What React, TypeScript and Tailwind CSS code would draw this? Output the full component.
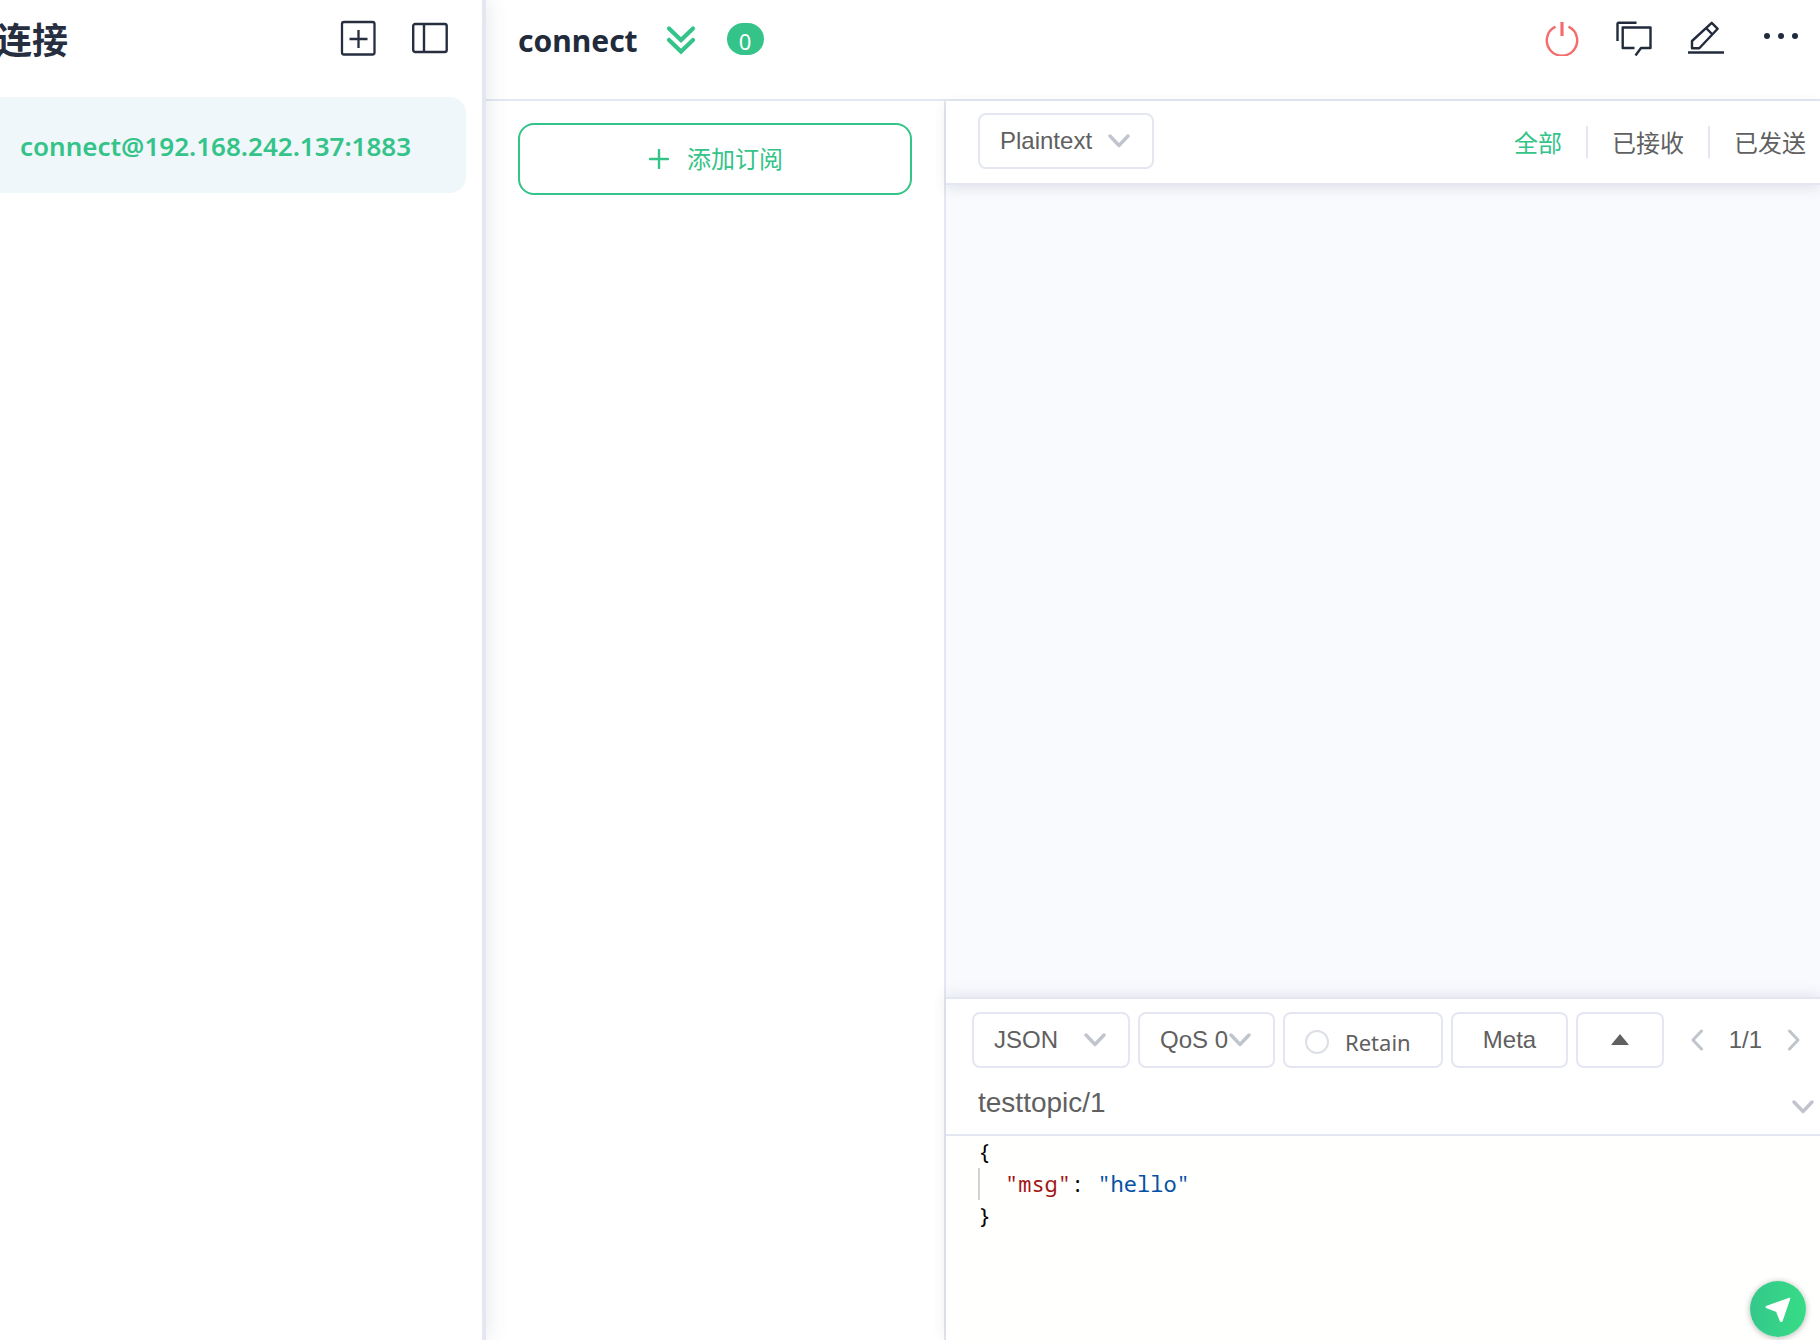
import { useState } from "react";
import type { ReactNode } from "react";

function Chevron({ className }: { className: string }) {
  return (
    <svg viewBox="0 0 22 14" fill="none" stroke="#c0c4cc" strokeWidth="3.4" strokeLinecap="round" strokeLinejoin="round" className={className} aria-hidden="true">
      <path d="M2 2 11 11.500 20 2" />
    </svg>
  );
}

function Dropdown({ label, options, box, arrow }: { label: string; options: string[]; box: string; arrow: string }) {
  return (
    <div className={`relative h-14 shrink-0 ${box}`}>
      <select
        aria-label={label}
        className="h-full w-full appearance-none rounded-lg border-2 border-[#e4e7f1] bg-white pl-5 font-['Liberation_Sans',sans-serif] text-2xl text-[#606060]"
      >
        {options.map((o) => (
          <option key={o}>{o}</option>
        ))}
      </select>
      <Chevron className={`pointer-events-none absolute top-[21px] h-[14px] w-[22px] ${arrow}`} />
    </div>
  );
}

function IconButton({ label, className = "", children }: { label: string; className?: string; children: ReactNode }) {
  return (
    <button type="button" aria-label={label} className={`flex h-9 w-9 shrink-0 items-center justify-center ${className}`}>
      {children}
    </button>
  );
}

function Sidebar() {
  return (
    <aside className="relative z-10 w-[486px] shrink-0 border-r-4 border-[#e4e7f1] bg-white shadow-[2px_0_20px_rgba(60,70,90,0.12)]">
      <header className="flex h-[97px] items-start pr-[34px] pt-5">
        <h1 className="-ml-1 flex-1 text-4xl font-bold leading-[42px] text-[#262e3f]">连接</h1>
        <div className="flex gap-9">
          <IconButton label="新建连接">
            <svg viewBox="0 0 36 36" className="h-9 w-9" fill="none" stroke="#262e3f" strokeWidth="2.3">
              <rect x="2" y="2" width="32.500" height="32.500" rx="2" />
              <path d="M18.500 10v18M9.500 19h18" />
            </svg>
          </IconButton>
          <IconButton label="收起侧栏">
            <svg viewBox="0 0 36 36" className="h-9 w-9" fill="none" stroke="#262e3f" strokeWidth="2.4">
              <rect x="1.200" y="4" width="33.500" height="28" rx="2" />
              <path d="M12 4v28" />
            </svg>
          </IconButton>
        </div>
      </header>
      <a href="#connect" className="mr-4 flex h-24 items-center rounded-r-2xl bg-[#f0f7fb] pl-5 pt-[2px] text-[26px] font-semibold text-[#34c388]">
        connect@192.168.242.137:1883
      </a>
    </aside>
  );
}

function TopBar() {
  return (
    <header className="flex h-[101px] shrink-0 items-start border-b-2 border-[#e4e7f1] pl-8 pr-5 pt-5">
      <h2 className="text-[30px] font-bold leading-[42px] text-[#222b3c]">connect</h2>
      <button type="button" aria-label="展开连接信息" className="ml-[27px] mt-1 h-8 w-8">
        <svg viewBox="0 0 32 32" className="h-8 w-8" fill="none" stroke="#34c388" strokeWidth="4.2" strokeLinecap="round">
          <path d="M4 4.500 16 16 28 4.500M4 16 16 27.500 28 16" />
        </svg>
      </button>
      <span className="ml-[30px] mt-[3px] flex h-8 w-[37px] items-center justify-center rounded-2xl bg-[#34c388] pt-1 text-[22px] leading-none text-white">0</span>
      <div className="ml-auto flex gap-9">
        <IconButton label="断开连接">
          <svg viewBox="0 0 36 36" className="h-9 w-9" fill="none" stroke="#f56c6c" strokeWidth="2.4">
            <path d="M11.500 6.700a15.200 15.200 0 1 0 13 0" />
            <path d="M18 2v14" strokeWidth="3.2" />
          </svg>
        </IconButton>
        <IconButton label="新建窗口">
          <svg viewBox="0 0 36 36" className="h-9 w-9" fill="none" stroke="#222b3c" strokeWidth="2.4">
            <path d="M1.500 21V4q0-1.300 1.300-1.300h17.700" />
            <path d="M18.500 28H6.700V7.500h27.800V28H25l-5.500 7.500" strokeLinejoin="round" />
          </svg>
        </IconButton>
        <IconButton label="编辑">
          <svg viewBox="0 0 36 36" className="h-9 w-9" fill="none" stroke="#222b3c" strokeWidth="2.4" strokeLinejoin="round">
            <path d="M0 32.500h36" />
            <path d="M4 28.300v-7.300L23.700 2.800l6 6L11.300 28.300ZM18 8l6.500 6.500" />
          </svg>
        </IconButton>
        <IconButton label="更多" className="ml-1">
          <svg viewBox="0 0 36 36" className="h-9 w-9" fill="#222b3c">
            <circle cx="3" cy="16" r="3" />
            <circle cx="17" cy="16" r="3" />
            <circle cx="31" cy="16" r="3" />
          </svg>
        </IconButton>
      </div>
    </header>
  );
}

function FilterTabs() {
  const tabs = ["全部", "已接收", "已发送"];
  const [active, setActive] = useState("全部");
  return (
    <nav className="flex items-center">
      {tabs.map((t, i) => (
        <div key={t} className="flex items-center">
          {i > 0 && <span className="mx-6 h-8 w-[2px] bg-[#e4e7f1]" />}
          <button
            type="button"
            onClick={() => setActive(t)}
            className={t === active ? "pt-[2px] text-2xl text-[#34c388]" : "pt-[2px] text-2xl text-[#606060]"}
          >
            {t}
          </button>
        </div>
      ))}
    </nav>
  );
}

function Publisher() {
  return (
    <section className="relative flex h-[343px] shrink-0 flex-col border-t-2 border-[#e4e7f1] bg-white shadow-[0_-2px_14px_rgba(60,70,90,0.12)]">
      <div className="flex items-center gap-2 pl-[26px] pr-5 pt-[13px]">
        <Dropdown label="格式" options={["JSON", "Plaintext", "Base64", "Hex"]} box="w-[158px]" arrow="right-6" />
        <Dropdown label="QoS" options={["QoS 0", "QoS 1", "QoS 2"]} box="w-[137px]" arrow="right-6" />
        <label className="flex h-14 w-40 shrink-0 items-center gap-4 rounded-lg border-2 border-[#e4e7f1] pl-5 pt-1 text-[22px] text-[#606060]">
          <input type="radio" name="retain" className="h-6 w-6 appearance-none rounded-full border-2 border-[#dcdfe6] bg-white" />
          Retain
        </label>
        <button type="button" className="h-14 w-[117px] shrink-0 rounded-lg border-2 border-[#e4e7f1] font-['Liberation_Sans',sans-serif] text-2xl text-[#606060]">
          Meta
        </button>
        <button type="button" aria-label="收起" className="flex h-14 w-[88px] shrink-0 items-center justify-center rounded-lg border-2 border-[#e4e7f1] pb-[2px]">
          <svg viewBox="0 0 18 11" className="h-[11px] w-[18px]" fill="#606060">
            <path d="M9 0 18 11H0Z" />
          </svg>
        </button>
        <div className="ml-auto flex items-center">
          <button type="button" aria-label="上一条">
            <svg viewBox="0 0 12 22" className="h-[22px] w-3" fill="none" stroke="#c0c4cc" strokeWidth="3" strokeLinecap="round" strokeLinejoin="round">
              <path d="M10.500 2 2 11l8.500 9" />
            </svg>
          </button>
          <span className="mx-[26px] font-['Liberation_Sans',sans-serif] text-2xl text-[#606060]">1/1</span>
          <button type="button" aria-label="下一条">
            <svg viewBox="0 0 12 22" className="h-[22px] w-3" fill="none" stroke="#c0c4cc" strokeWidth="3" strokeLinecap="round" strokeLinejoin="round">
              <path d="M1.500 2 10 11l-8.500 9" />
            </svg>
          </button>
        </div>
      </div>
      <div className="flex h-[68px] shrink-0 items-center border-b-2 border-[#e4e7f1] pl-8 pr-[6px] pt-1">
        <input
          aria-label="主题"
          defaultValue="testtopic/1"
          className="min-w-0 flex-1 bg-transparent font-['Liberation_Sans',sans-serif] text-[28px] leading-9 text-[#606060] outline-none"
        />
        <button type="button" aria-label="展开主题">
          <Chevron className="mt-2 h-[14px] w-[22px]" />
        </button>
      </div>
      <div className="flex-1 bg-[#fffffd] pl-8 font-['Noto_Sans_Mono','Liberation_Mono',monospace] text-[22px] leading-[30px] text-black">
        <div className="h-8">{"{"}</div>
        <div className="h-8 whitespace-pre border-l-2 border-[#d3d3d3] pl-[25px]">
          <span className="text-[#a31515]">"msg"</span>: <span className="text-[#0451a5]">"hello"</span>
        </div>
        <div className="h-8">{"}"}</div>
      </div>
      <button
        type="button"
        aria-label="发送"
        className="absolute bottom-[3px] right-[14px] flex h-14 w-14 items-center justify-center rounded-full bg-linear-to-r from-[#34c88b] to-[#37dc85] shadow-[0_1px_6px_rgba(0,0,0,0.3)]"
      >
        <svg viewBox="0 0 26 26" className="mt-px h-[26px] w-[26px]" fill="#fff" stroke="#fff" strokeLinejoin="round">
          <path d="M1 9.500 25 1 17 24.500H15.500L11.500 14.500 1 10.500Z" />
        </svg>
      </button>
    </section>
  );
}

export default function App() {
  return (
    <div className="flex h-screen overflow-hidden bg-white font-['Noto_Sans','Noto_Sans_CJK_SC',sans-serif]">
      <Sidebar />
      <main className="flex min-w-0 flex-1 flex-col">
        <TopBar />
        <div className="flex min-h-0 flex-1">
          <section className="w-[460px] shrink-0 border-r-2 border-[#e4e7f1] px-8 pt-[22px]">
            <button type="button" className="flex h-[72px] w-full items-center justify-center gap-[18px] rounded-2xl border-2 border-[#34c388] pl-[2px] text-2xl text-[#34c388]">
              <svg viewBox="0 0 20 20" className="h-5 w-5" stroke="#34c388" strokeWidth="2.4" strokeLinecap="round">
                <path d="M10 1v18M1 10h18" />
              </svg>
              添加订阅
            </button>
          </section>
          <div className="flex min-w-0 flex-1 flex-col bg-[#f9fafe]">
            <div className="flex h-[84px] shrink-0 items-start justify-between border-b-2 border-[#e4e7f1] bg-white pl-8 pr-[14px] pt-3 shadow-[0_4px_12px_rgba(60,70,90,0.12)]">
              <Dropdown label="显示格式" options={["Plaintext", "JSON", "Base64", "Hex"]} box="w-44" arrow="right-6" />
              <div className="flex h-[58px] items-center">
                <FilterTabs />
              </div>
            </div>
            <div className="min-h-0 flex-1" />
            <Publisher />
          </div>
        </div>
      </main>
    </div>
  );
}
